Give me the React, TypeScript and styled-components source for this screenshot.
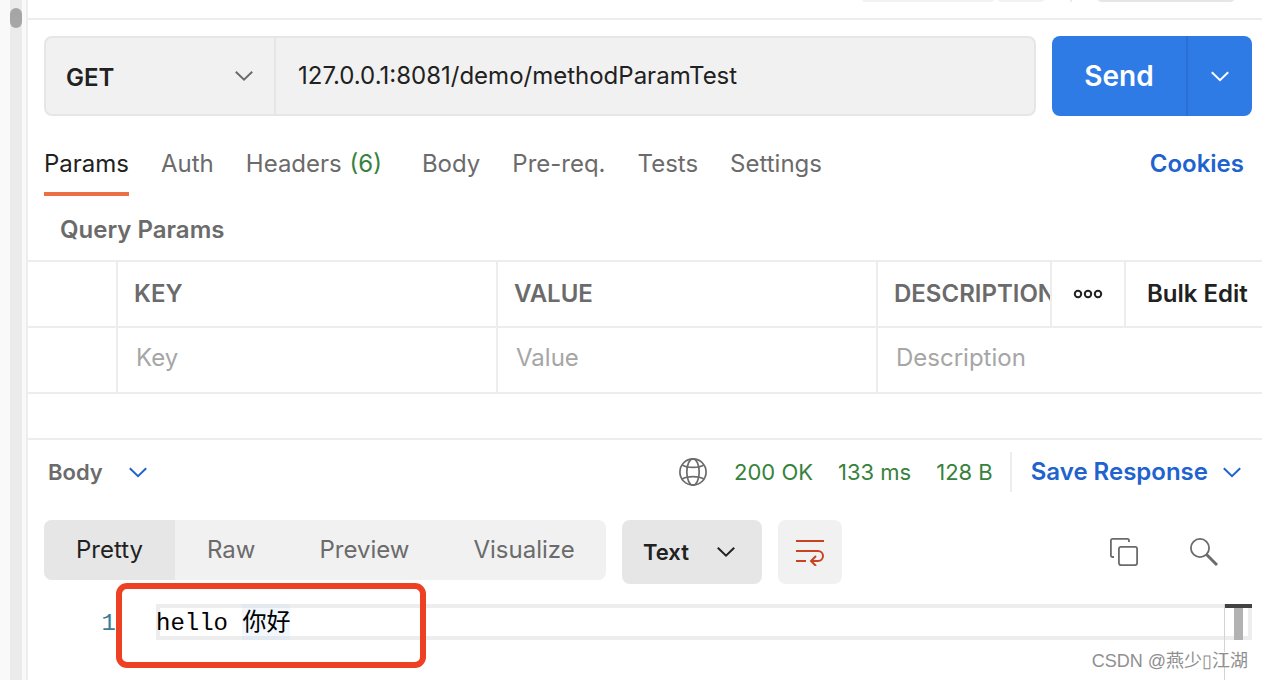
import React, { useState } from "react";
import styled, { createGlobalStyle, css } from "styled-components";

const ink = "#212121";
const muted = "#6b6b6b";
const line = "#ededed";
const blue = "#2062ce";
const green = "#37823c";

const GlobalStyle = createGlobalStyle`
  * { box-sizing: border-box; }
  body {
    margin: 0;
    background: #fff;
    color: ${ink};
    font: 400 24px/32px Inter, "Noto Sans CJK SC", sans-serif;
  }
  button, input, select {
    margin: 0;
    padding: 0;
    border: 0;
    background: transparent;
    color: inherit;
    font: inherit;
    letter-spacing: inherit;
    outline: none;
  }
  button { cursor: pointer; }
`;

const Page = styled.div`
  position: relative;
  display: flex;
  min-height: 100vh;
  overflow: hidden;
`;

const Rail = styled.aside`
  flex: none;
  width: 28px;
  padding: 0 4px 0 10px;
  background: #f9f9f9;
  border-right: 2px solid ${line};
  display: flex;
`;

const ScrollTrack = styled.div`
  width: 12px;
  padding-top: 8px;
  background: #ebebeb;
`;

const ScrollThumb = styled.div`
  height: 20px;
  border-radius: 6px;
  background: #a6a6a6;
`;

const Main = styled.main`
  flex: 1;
  min-width: 0;
  display: flex;
  flex-direction: column;
`;

const TopStrip = styled.div`
  display: flex;
  justify-content: flex-end;
  height: 20px;
  padding-right: 28px;
  border-bottom: 2px solid ${line};
`;

const StripEdge = styled.div<{ $width: number; $gap: number; $color?: string; $square?: boolean }>`
  width: ${(p) => p.$width}px;
  height: 2px;
  margin-right: ${(p) => p.$gap}px;
  background: ${(p) => p.$color ?? "#f1f1f1"};
  border-radius: ${(p) => (p.$square ? "0" : "0 0 6px 6px / 0 0 2px 2px")};
`;

const RequestBar = styled.form`
  display: flex;
  gap: 16px;
  padding: 16px 10px 0 16px;
`;

const UrlGroup = styled.div`
  flex: 1;
  min-width: 0;
  display: flex;
  height: 80px;
  border: 2px solid #e6e6e6;
  border-radius: 8px;
  background: #f1f1f1;
`;

const SelectWrap = styled.div`
  position: relative;
  display: flex;
  flex: none;
  font-weight: 600;

  select {
    appearance: none;
    cursor: pointer;
  }
  svg {
    position: absolute;
    top: 50%;
    transform: translateY(-50%);
    pointer-events: none;
  }
`;

const MethodSelect = styled(SelectWrap)`
  width: 230px;
  border-right: 2px solid #e6e6e6;
  select { width: 100%; padding: 3px 0 0 20px; }
  svg { right: 21px; color: ${muted}; }
`;

const UrlInput = styled.input`
  flex: 1;
  min-width: 0;
  padding: 0 22px;
`;

const SendGroup = styled.div`
  display: flex;
  flex: none;
  width: 200px;
  border-radius: 8px;
  overflow: hidden;
  background: #2f7be5;
  color: #fff;
`;

const SendButton = styled.button`
  flex: 1;
  font-size: 28px;
  font-weight: 600;
`;

const SendMore = styled.button`
  display: grid;
  place-items: center;
  width: 66px;
  border-left: 2px solid #2a6fd4;
`;

const TabRow = styled.nav`
  display: flex;
  align-items: flex-start;
  gap: 32px;
  padding: 32px 18px 0 16px;
`;

const Tab = styled.button<{ $active?: boolean }>`
  height: 48px;
  padding-bottom: 12px;
  border-bottom: 4px solid ${(p) => (p.$active ? "#ed7044" : "transparent")};
  color: ${(p) => (p.$active ? ink : muted)};
  white-space: nowrap;
`;

const Count = styled.span`
  margin: 0 8px 0 1px;
  color: ${green};
`;

const CookiesLink = styled.a`
  margin-left: auto;
  color: ${blue};
  font-weight: 600;
  text-decoration: none;
`;

const SectionTitle = styled.h2`
  margin: 0;
  padding: 18px 32px 14px;
  color: ${muted};
  font-size: 24px;
  font-weight: 600;
`;

const ParamTable = styled.table`
  width: 100%;
  table-layout: fixed;
  border-collapse: separate;
  border-spacing: 0;
  border-top: 2px solid ${line};

  tr { height: 66px; }
  th, td {
    padding: 0;
    border-bottom: 2px solid ${line};
    border-right: 2px solid ${line};
    text-align: left;
  }
  th {
    padding-left: 16px;
    overflow: hidden;
    color: ${muted};
    font-weight: 600;
    white-space: nowrap;
  }
  tr > :last-child { border-right: 0; }
`;

const Col = styled.col<{ $width?: number }>`
  ${(p) => p.$width && css`width: ${p.$width}px;`}
`;

const IconCell = styled.th`
  && { padding: 0; }
  button { display: grid; place-items: center; width: 100%; height: 64px; }
`;

const ActionCell = styled.th`
  && { padding-left: 21px; color: ${ink}; }
`;

const CellInput = styled.input`
  display: block;
  width: 100%;
  height: 64px;
  padding: 0 18px 6px;
  &::placeholder { color: #a6a6a6; opacity: 1; }
`;

const Response = styled.section`
  flex: 1;
  display: flex;
  flex-direction: column;
  margin-top: 44px;
  border-top: 2px solid ${line};
`;

const ResponseHeader = styled.header`
  display: flex;
  align-items: center;
  height: 64px;
  padding: 0 21px 0 20px;
`;

const BodyButton = styled.button`
  display: flex;
  align-items: center;
  gap: 26px;
  color: ${muted};
  font-size: 22px;
  font-weight: 600;
  svg { color: ${blue}; }
`;

const Stats = styled.div`
  display: flex;
  align-items: center;
  gap: 25px;
  height: 40px;
  margin-left: auto;
  padding-right: 17px;
  border-right: 2px solid ${line};
  color: ${green};
  font-size: 22px;
  white-space: nowrap;
  svg { color: ${muted}; margin-right: 2px; }
`;

const SaveButton = styled.button`
  display: flex;
  align-items: center;
  gap: 15px;
  padding-left: 19px;
  color: ${blue};
  font-weight: 600;
  white-space: nowrap;
`;

const Toolbar = styled.div`
  display: flex;
  align-items: flex-start;
  gap: 16px;
  padding: 16px 32px 0 16px;
`;

const ViewGroup = styled.div`
  display: flex;
  flex: none;
  width: 562px;
  height: 60px;
  border-radius: 8px;
  overflow: hidden;
  background: #f1f1f1;
`;

const ViewButton = styled.button<{ $active?: boolean }>`
  padding: 0 32px;
  background: ${(p) => (p.$active ? "#e6e6e6" : "transparent")};
  color: ${(p) => (p.$active ? ink : muted)};
`;

const FormatSelect = styled(SelectWrap)`
  width: 140px;
  height: 64px;
  border-radius: 8px;
  background: #e6e6e6;
  font-size: 22px;
  select { width: 100%; padding-left: 21px; }
  svg { right: 27px; }
`;

const WrapButton = styled.button`
  display: grid;
  place-items: center;
  width: 64px;
  height: 64px;
  border-radius: 8px;
  background: #f1f1f1;
  color: #c64422;
`;

const ToolbarIcons = styled.div`
  display: flex;
  align-items: center;
  gap: 52px;
  height: 64px;
  margin-left: auto;
  padding-right: 12px;
  color: ${muted};
  button { display: grid; place-items: center; width: 28px; height: 28px; }
`;

const Editor = styled.div`
  position: relative;
  flex: 1;
  display: flex;
  padding: 20px 10px 0 0;
  font-family: "Liberation Mono", "Noto Sans CJK SC", monospace;
  line-height: 40px;
`;

const Gutter = styled.div`
  flex: none;
  width: 128px;
  padding-right: 40px;
  color: #3d7c98;
  text-align: right;
`;

const CodeLine = styled.div`
  flex: 1;
  min-width: 0;
  height: 36px;
  box-shadow: inset 0 0 0 4px ${line};
  color: #000;
  white-space: pre;
`;

const Unicode = styled.span`
  display: inline-block;
  height: 36px;
  background: rgba(200, 224, 248, 0.25);
`;

const Ruler = styled.div`
  position: absolute;
  top: 20px;
  right: 10px;
  bottom: 0;
  width: 28px;
  border-left: 1px solid #d4d4d4;
  &::before {
    content: "";
    display: block;
    height: 4px;
    background: #424242;
  }
  &::after {
    content: "";
    display: block;
    width: 9px;
    height: 32px;
    margin-left: 9px;
    background: #b2b2b2;
  }
`;

const RedBox = styled.div`
  position: absolute;
  top: -1px;
  left: 88px;
  width: 310px;
  height: 85px;
  border: 6px solid #ee4023;
  border-radius: 11px;
`;

const Watermark = styled.div`
  position: absolute;
  right: 14px;
  bottom: 5px;
  color: #8f8f8f;
  font-family: "Liberation Sans", "Noto Sans CJK SC", sans-serif;
  font-size: 18px;
  line-height: 28px;
  text-shadow: -1px -1px 0 #fff;
`;

const Chevron = () => (
  <svg width="18" height="11" viewBox="0 0 18 11" fill="none" stroke="currentColor" strokeWidth="2" aria-hidden="true">
    <path d="M0.8 1.2 9 9.2l8.2-8" />
  </svg>
);

const DotsIcon = () => (
  <svg width="30" height="10" viewBox="0 0 30 10" fill="none" stroke={ink} strokeWidth="2" aria-hidden="true">
    <circle cx="5" cy="5" r="3.2" />
    <circle cx="15" cy="5" r="3.2" />
    <circle cx="25" cy="5" r="3.2" />
  </svg>
);

const GlobeIcon = () => (
  <svg width="28" height="28" viewBox="0 0 28 28" fill="none" stroke="currentColor" strokeWidth="1.7" aria-hidden="true">
    <circle cx="14" cy="14" r="13.1" />
    <ellipse cx="14" cy="14" rx="6.2" ry="13.1" />
    <path d="M3 7c5.5 3.2 16.5 3.2 22 0M3 21c5.5-3.2 16.5-3.2 22 0" />
  </svg>
);

const WrapIcon = () => (
  <svg width="28" height="28" viewBox="0 0 28 28" fill="none" stroke="currentColor" strokeWidth="2" aria-hidden="true">
    <path d="M0 3h28M0 13h22a5 5 0 0 1 0 10h-7M0 23h10M20 18l-5 5 5 5" />
  </svg>
);

const CopyIcon = () => (
  <svg width="28" height="28" viewBox="0 0 28 28" fill="none" stroke="currentColor" strokeWidth="1.8" aria-hidden="true">
    <path d="M4 19H2.5A1.6 1.6 0 0 1 .9 17.4V2.5A1.6 1.6 0 0 1 2.5.9h14.9A1.6 1.6 0 0 1 19 2.5V4" />
    <rect x="8.9" y="8.9" width="18.2" height="18.2" rx="2" />
  </svg>
);

const SearchIcon = () => (
  <svg width="28" height="28" viewBox="0 0 28 28" fill="none" stroke="currentColor" aria-hidden="true">
    <circle cx="10" cy="10" r="9.1" strokeWidth="1.8" />
    <path d="m16.5 16.5 10.5 10.5" strokeWidth="3" />
  </svg>
);

const requestTabs = ["Params", "Auth", "Headers", "Body", "Pre-req.", "Tests", "Settings"];
const views = ["Pretty", "Raw", "Preview", "Visualize"];

export default function App() {
  const [tab, setTab] = useState("Params");
  const [view, setView] = useState("Pretty");
  const [url, setUrl] = useState("127.0.0.1:8081/demo/methodParamTest");

  return (
    <>
      <GlobalStyle />
      <Page>
        <Rail>
          <ScrollTrack>
            <ScrollThumb />
          </ScrollTrack>
        </Rail>
        <Main>
          <TopStrip>
            <StripEdge $width={132} $gap={4} />
            <StripEdge $width={46} $gap={26} />
            <StripEdge $width={2} $gap={26} $color={line} $square />
            <StripEdge $width={136} $gap={0} $color="#e6e6e6" />
          </TopStrip>
          <RequestBar onSubmit={(e) => e.preventDefault()}>
            <UrlGroup>
              <MethodSelect>
                <select aria-label="Request method" defaultValue="GET">
                  <option>GET</option>
                  <option>POST</option>
                </select>
                <Chevron />
              </MethodSelect>
              <UrlInput aria-label="Request URL" value={url} onChange={(e) => setUrl(e.target.value)} />
            </UrlGroup>
            <SendGroup>
              <SendButton type="submit">Send</SendButton>
              <SendMore type="button" aria-label="Send options"><Chevron /></SendMore>
            </SendGroup>
          </RequestBar>
          <TabRow>
            {requestTabs.map((name) => (
              <Tab key={name} type="button" $active={name === tab} onClick={() => setTab(name)}>
                {name}
                {name === "Headers" && <> <Count>(6)</Count></>}
              </Tab>
            ))}
            <CookiesLink href="#cookies">Cookies</CookiesLink>
          </TabRow>
          <SectionTitle>Query Params</SectionTitle>
          <ParamTable>
            <colgroup>
              <Col $width={90} />
              <Col $width={380} />
              <Col $width={380} />
              <Col />
              <Col $width={74} />
              <Col $width={136} />
            </colgroup>
            <thead>
              <tr>
                <th />
                <th>KEY</th>
                <th>VALUE</th>
                <th>DESCRIPTION</th>
                <IconCell><button type="button" aria-label="More columns"><DotsIcon /></button></IconCell>
                <ActionCell><button type="button">Bulk Edit</button></ActionCell>
              </tr>
            </thead>
            <tbody>
              <tr>
                <td />
                <td><CellInput aria-label="Key" placeholder="Key" /></td>
                <td><CellInput aria-label="Value" placeholder="Value" /></td>
                <td colSpan={3}><CellInput aria-label="Description" placeholder="Description" /></td>
              </tr>
            </tbody>
          </ParamTable>
          <Response>
            <ResponseHeader>
              <BodyButton type="button">Body<Chevron /></BodyButton>
              <Stats>
                <GlobeIcon />
                <span>200 OK</span>
                <span>133 ms</span>
                <span>128 B</span>
              </Stats>
              <SaveButton type="button">Save Response<Chevron /></SaveButton>
            </ResponseHeader>
            <Toolbar>
              <ViewGroup>
                {views.map((name) => (
                  <ViewButton key={name} type="button" $active={name === view} onClick={() => setView(name)}>
                    {name}
                  </ViewButton>
                ))}
              </ViewGroup>
              <FormatSelect>
                <select aria-label="Response format" defaultValue="Text">
                  <option>Text</option>
                  <option>JSON</option>
                </select>
                <Chevron />
              </FormatSelect>
              <WrapButton type="button" aria-label="Wrap lines"><WrapIcon /></WrapButton>
              <ToolbarIcons>
                <button type="button" aria-label="Copy"><CopyIcon /></button>
                <button type="button" aria-label="Search"><SearchIcon /></button>
              </ToolbarIcons>
            </Toolbar>
            <Editor>
              <Gutter>1</Gutter>
              <CodeLine>hello <Unicode>你好</Unicode></CodeLine>
              <Ruler />
              <RedBox />
            </Editor>
          </Response>
        </Main>
        <Watermark>CSDN @燕少▯江湖</Watermark>
      </Page>
    </>
  );
}
